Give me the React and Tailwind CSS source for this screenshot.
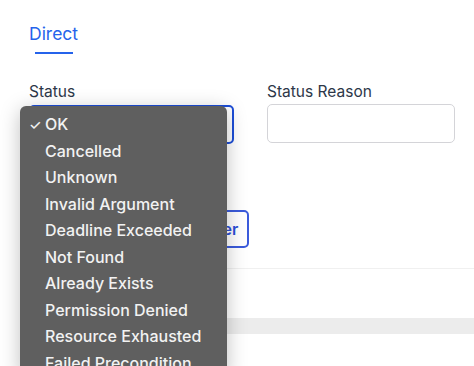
import React from 'react';

const statuses = [
  'OK',
  'Cancelled',
  'Unknown',
  'Invalid Argument',
  'Deadline Exceeded',
  'Not Found',
  'Already Exists',
  'Permission Denied',
  'Resource Exhausted',
  'Failed Precondition',
];

const App = () => {
  return (
    <div className="relative h-[366px] w-[474px] overflow-hidden bg-white font-['Inter',sans-serif]">
      {/* Tabs */}
      <div className="px-[29px] pt-[22px]">
        <div className="inline-flex flex-col items-center">
          <span className="text-[17.5px] leading-[22px] text-[#2563eb]">Direct</span>
          <span className="mt-[7px] h-[2px] w-[38px] bg-[#2563eb]"></span>
        </div>
      </div>

      {/* Form */}
      <div className="mt-[28px] flex gap-[33px] px-[29px]">
        <div className="w-[205px] shrink-0">
          <label className="block text-[15.5px] leading-[20px] text-[#2d3748]">Status</label>
          <div className="mt-[3px] h-[39px] rounded-[5px] border-2 border-[#1d4ed8]"></div>
        </div>
        <div className="w-[188px] shrink-0">
          <label className="block text-[15.5px] leading-[20px] text-[#2d3748]">Status Reason</label>
          <div className="mt-[2px] h-[39px] rounded-[5px] border border-[#d4d4d8]"></div>
        </div>
      </div>

      {/* Actions */}
      <div className="mt-[66px] flex px-[29px]">
        <button className="ml-[160px] h-[38px] rounded-[5px] border-2 border-[#3b5bdb] pl-[8px] pr-[9px] text-[16px] font-semibold text-[#2b4fd8]">
          Filter
        </button>
      </div>

      {/* Results */}
      <div className="ml-[29px]">
        <div className="mt-[20px] h-px bg-[#f0f0f0]"></div>
        <div className="mt-[49px] h-[16px] bg-[#ececec]"></div>
      </div>

      {/* Status dropdown menu */}
      <div className="absolute left-[20px] top-[106px] w-[207px] rounded-[6px] bg-[#5f5f5f] pt-[5px] shadow-[0_4px_20px_rgba(0,0,0,0.25)]">
        {statuses.map((s, i) => (
          <div key={s} className="flex h-[26.5px] items-center text-[16px] font-medium text-[#f2f2f2]">
            <span className="w-[25px] pl-[9px] text-[14px]">{i === 0 ? '✓' : ''}</span>
            <span>{s}</span>
          </div>
        ))}
      </div>
    </div>
  );
};

export default App;
